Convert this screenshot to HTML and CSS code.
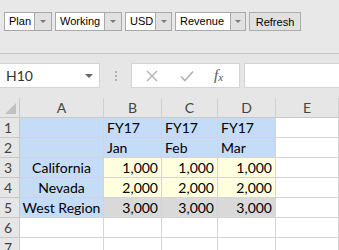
FILE: index.html
```html
<!DOCTYPE html>
<html>
<head>
<meta charset="utf-8">
<link rel="stylesheet" href="styles.css">
</head>
<body>
<div class="toolbar">
  <div class="combo"><span class="field w31">Plan</span><span class="drop"><span class="tri"></span></span></div>
  <div class="combo"><span class="field w50">Working</span><span class="drop"><span class="tri"></span></span></div>
  <div class="combo"><span class="field w31">USD</span><span class="drop d16"><span class="tri"></span></span></div>
  <div class="combo"><span class="field w56">Revenue</span><span class="drop d15"><span class="tri"></span></span></div>
  <button class="btn">Refresh</button>
</div>
<div class="fbar">
  <div class="namebox"><span>H10</span><span class="ntri"></span></div>
  <div class="dots"><i></i><i></i><i></i></div>
  <div class="fbtns">
    <svg class="ico" width="12" height="12" viewBox="0 0 12 12"><path d="M1 1 L11 11 M11 1 L1 11" stroke="#b3b3b3" stroke-width="1.4" fill="none"/></svg>
    <svg class="ico" width="14" height="12" viewBox="0 0 14 12"><path d="M1 6.5 L5 10.5 L13 1.5" stroke="#b3b3b3" stroke-width="1.6" fill="none"/></svg>
    <span class="fx">f<sub>x</sub></span>
  </div>
  <div class="finput"></div>
</div>
<div class="sheet">
  <div class="corner"><span class="ctri"></span></div>
  <div class="ch">A</div><div class="ch">B</div><div class="ch">C</div><div class="ch">D</div><div class="ch">E</div>

  <div class="rh">1</div><div class="c blue"></div><div class="c blue">FY17</div><div class="c blue">FY17</div><div class="c blue">FY17</div><div class="c"></div>
  <div class="rh">2</div><div class="c blue"></div><div class="c blue">Jan</div><div class="c blue">Feb</div><div class="c blue">Mar</div><div class="c"></div>
  <div class="rh">3</div><div class="c blue ctr">California</div><div class="c yel num">1,000</div><div class="c yel num">1,000</div><div class="c yel num">1,000</div><div class="c"></div>
  <div class="rh">4</div><div class="c blue ctr">Nevada</div><div class="c yel num">2,000</div><div class="c yel num">2,000</div><div class="c yel num">2,000</div><div class="c"></div>
  <div class="rh">5</div><div class="c blue ctr">West Region</div><div class="c gry num">3,000</div><div class="c gry num">3,000</div><div class="c gry num">3,000</div><div class="c"></div>
  <div class="rh">6</div><div class="c"></div><div class="c"></div><div class="c"></div><div class="c"></div><div class="c"></div>
  <div class="rh">7</div><div class="c"></div><div class="c"></div><div class="c"></div><div class="c"></div><div class="c"></div>
</div>
</body>
</html>
```

FILE: styles.css
```css
html, body {
  margin: 0;
  padding: 0;
  background: #e6e6e6;
  overflow: hidden;
  width: 339px;
  height: 250px;
}
.toolbar {
  padding: 12px 0 0 4px;
  box-sizing: border-box;
  display: flex;
  align-items: flex-start;
  gap: 3px;
  border-bottom: 1px solid #c6c6c6;
  background: #e8e8e8;
  height: 54px;
}
.combo {
  display: flex;
  height: 19px;
}
.field {
  box-sizing: border-box;
  height: 19px;
  background: #fff;
  border: 1px solid #a9a9a9;
  font: 11px "Liberation Sans", Arial, sans-serif;
  color: #000;
  padding: 0 0 0 4px;
  line-height: 17px;
}
.w31 { width: 31px; }
.w50 { width: 50px; }
.w56 { width: 56px; }
.drop {
  box-sizing: border-box;
  width: 17px;
  height: 19px;
  background: #e1e1e1;
  border: 1px solid #a9a9a9;
  border-left: none;
  display: flex;
  align-items: center;
  justify-content: center;
}
.d16 { width: 16px; }
.d15 { width: 15px; }
.tri {
  width: 0;
  height: 0;
  border-left: 3px solid transparent;
  border-right: 3px solid transparent;
  border-top: 3px solid #7a7a7a;
}
.btn {
  box-sizing: border-box;
  width: 52px;
  height: 19px;
  margin: 0;
  padding: 0;
  background: #e1e1e1;
  border: 1px solid #adadad;
  font: 11px "Liberation Sans", Arial, sans-serif;
  color: #000;
}
.fbar {
  height: 44px;
  box-sizing: border-box;
  padding-top: 9px;
  display: flex;
  align-items: flex-start;
}
.namebox {
  box-sizing: border-box;
  width: 100px;
  height: 25px;
  background: #fff;
  border: 1px solid #d4d4d4;
  border-left: none;
  display: flex;
  align-items: center;
  justify-content: space-between;
  padding: 0 6px 0 6px;
  font: 14px Lato, "Open Sans", sans-serif;
  color: #333;
}
.ntri {
  width: 0;
  height: 0;
  border-left: 4px solid transparent;
  border-right: 4px solid transparent;
  border-top: 4px solid #666;
}
.dots {
  width: 31px;
  height: 25px;
  display: flex;
  flex-direction: column;
  align-items: center;
  justify-content: center;
  gap: 2px;
}
.dots i {
  display: block;
  width: 2px;
  height: 2px;
  background: #b0b0b0;
}
.fbtns {
  box-sizing: border-box;
  width: 109px;
  height: 25px;
  background: #fff;
  border: 1px solid #d4d4d4;
  display: flex;
  align-items: center;
  padding-left: 14px;
}
.fbtns .ico:first-child { margin-right: 22px; }
.fbtns .ico:nth-child(2) { margin-right: 20px; }
.fx {
  font: italic 15px "Liberation Serif", serif;
  color: #555;
}
.fx sub {
  font-size: 11px;
  vertical-align: -1px;
}
.finput {
  box-sizing: border-box;
  margin-left: 4px;
  flex: 1;
  height: 25px;
  background: #fff;
  border: 1px solid #d4d4d4;
  border-right: none;
}
.sheet {
  display: grid;
  grid-template-columns: 20px 84px 58px 56px 58px 1fr;
  grid-auto-rows: 20px;
  font: 14px Lato, "Open Sans", sans-serif;
  color: #000;
  background: #fff;
}
.corner, .ch, .rh {
  background: #e6e6e6;
  color: #444;
  box-sizing: border-box;
  border-right: 1px solid #c8c8c8;
  border-bottom: 1px solid #c8c8c8;
}
.corner {
  position: relative;
}
.ctri {
  position: absolute;
  right: 3px;
  bottom: 3px;
  width: 0;
  height: 0;
  border-left: 11px solid transparent;
  border-bottom: 11px solid #c0c0c0;
}
.ch {
  display: flex;
  align-items: center;
  justify-content: center;
  border-right-color: #d0d0d0;
}
.rh {
  display: flex;
  align-items: center;
  padding-left: 4px;
}
.c {
  box-sizing: border-box;
  border-right: 1px solid #d4d4d4;
  border-bottom: 1px solid #d4d4d4;
  display: flex;
  align-items: center;
  padding: 0 3px;
  white-space: nowrap;
}
.blue { background: #c5dcf8; }
.yel { background: #ffffe0; }
.gry { background: #d9d9d9; }
.ctr { justify-content: center; }
.num { justify-content: flex-end; }
```
